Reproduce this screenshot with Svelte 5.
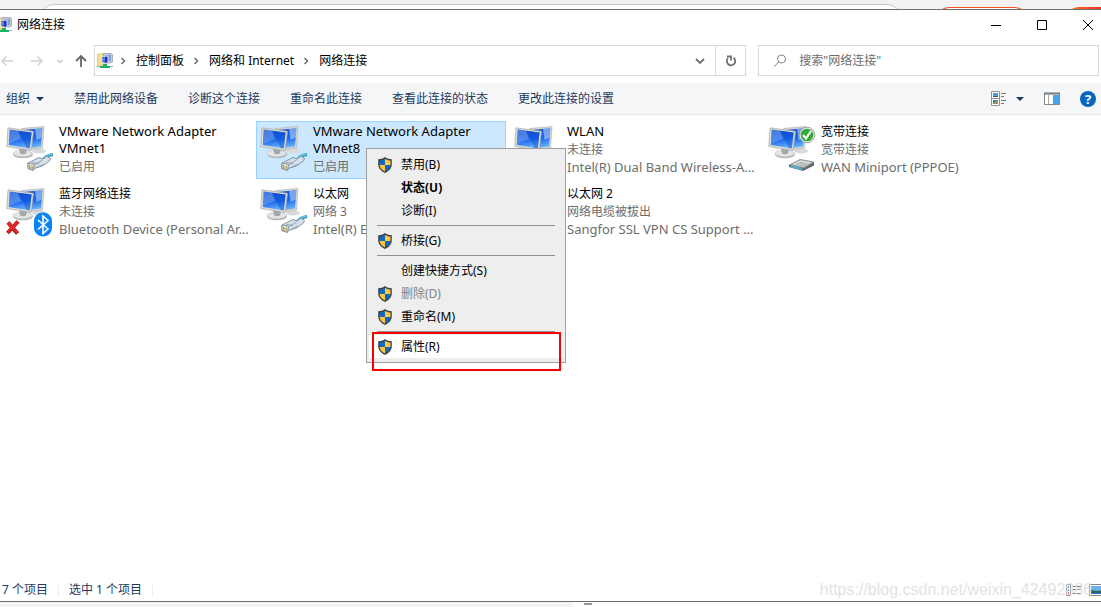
<script>
    const commands = ['禁用此网络设备', '诊断这个连接', '重命名此连接', '查看此连接的状态', '更改此连接的设置'];

    const crumbs = ['控制面板', '网络和 Internet', '网络连接'];

    const connections = [
        { name: 'VMware Network Adapter VMnet1', status: '已启用', device: '', badge: 'cable', latin: true },
        { name: 'VMware Network Adapter VMnet8', status: '已启用', device: '', badge: 'cable', latin: true },
        { name: 'WLAN', status: '未连接', device: 'Intel(R) Dual Band Wireless-A...', badge: 'none', latin: true },
        { name: '宽带连接', status: '宽带连接', device: 'WAN Miniport (PPPOE)', badge: 'modem', latin: false },
        { name: '蓝牙网络连接', status: '未连接', device: 'Bluetooth Device (Personal Ar...', badge: 'bluetooth', latin: false },
        { name: '以太网', status: '网络 3', device: 'Intel(R) Ethernet...', badge: 'cable', latin: false },
        { name: '以太网 2', status: '网络电缆被拔出', device: 'Sangfor SSL VPN CS Support ...', badge: 'none', latin: false }
    ];

    const menu = [
        [
            { text: '禁用(B)', shield: true },
            { text: '状态(U)', bold: true },
            { text: '诊断(I)' }
        ],
        [{ text: '桥接(G)', shield: true }],
        [
            { text: '创建快捷方式(S)' },
            { text: '删除(D)', shield: true, disabled: true },
            { text: '重命名(M)', shield: true }
        ],
        [{ text: '属性(R)', shield: true, hover: true }]
    ];

    let selected = $state(1);
    let query = $state('');
</script>

{#snippet folderIcon()}
    <svg class="folder-icon" viewBox="0 0 16 16" aria-hidden="true">
        <path d="M0 1h6l1 1v11H0z" fill="#f7e08a" stroke="#d8b44a" stroke-width=".6" />
        <path d="M6 .5h8.5l1 1V9L13 10H7z" fill="#c3cbd3" stroke="#8d98a5" stroke-width=".7" />
        <path d="M8 2h6v6H8z" fill="#7f9fd8" />
        <path d="M5 3.500l6-.5v7.500l-6-1z" fill="#1a2fc0" stroke="#dfe5ee" />
        <path d="M6 5l2-1v4l-2 1z" fill="#5e8cf5" />
        <path d="M6 11h4v2h3v2H3v-2h3z" fill="#19b565" />
        <path d="M0 13.500h3M13 13.500h3" stroke="#a9b5b0" />
    </svg>
{/snippet}

{#snippet shieldIcon()}
    <svg class="shield" viewBox="0 0 14 16" aria-hidden="true">
        <path d="M7 0C5 1.600 3 2.200.2 2.300v5.400C.4 11.200 3.200 14 7 16c3.800-2 6.600-4.800 6.800-8.300V2.300C11 2.200 9 1.600 7 0z" fill="#3e4348" />
        <path d="M7 1.700V8H1.500V3.500C3.800 3.400 5.400 2.900 7 1.700z" fill="#0f68c4" />
        <path d="M7 1.700V8h5.500V3.500C10.200 3.400 8.600 2.900 7 1.700z" fill="#ffc83a" />
        <path d="M1.500 8H7v6.500C4 12.900 1.800 10.700 1.500 8z" fill="#ffc83a" />
        <path d="M12.500 8H7v6.500c3-1.600 5.200-3.800 5.500-6.500z" fill="#0f68c4" />
    </svg>
{/snippet}

{#snippet adapterIcon(badge)}
    <svg class="adapter" viewBox="0 0 48 48" aria-hidden="true">
        <ellipse cx="33" cy="28" rx="7" ry="2.500" fill="#d8d9da" />
        <path d="M15.500 5.500L38 3.500 36.500 25l-12 1.500z" fill="#d3d6d2" stroke="#b3b6b2" stroke-width=".7" />
        <path d="M18 7l18.300-1.700L35 23.500l-10 1.200z" fill="url(#screen)" />
        <path d="M29 6l7.300-.7-.7 9.500-5 2z" fill="#b5d7fb" opacity=".6" />
        <ellipse cx="17" cy="31.500" rx="10" ry="3.800" fill="#b4b5b6" />
        <ellipse cx="16.500" cy="30.500" rx="9.500" ry="3.300" fill="#e4e5e5" stroke="#bbbdbe" stroke-width=".5" />
        <path d="M13 25l8 1-1 4.500q-3.500 1.500-6 0z" fill="#a5a8aa" />
        <path d="M2 4.800L27.500 8.300l-2.300 19.200L.8 23.500z" fill="#deded9" stroke="#a3a6a6" stroke-width=".7" />
        <path d="M3.700 6.600l21.900 3-1.800 15.800-21-3.300z" fill="url(#screen)" />
        <path d="M3.700 6.600l8.300 1.100 3 8.300-12 4.500z" fill="#d3e6fd" opacity=".28" />
        <path d="M13 7.900l12.600 1.700-1.800 15.800-3.300-.5z" fill="#0a48c8" opacity=".4" />
        {#if badge === 'cable'}
            <path d="M37 37q3-4.500 10-5.500" fill="none" stroke="#2d9bc1" stroke-width="3" />
            <path d="M37 36q3-4 9-4.500" fill="none" stroke="#7fd4ec" stroke-width="1.200" />
            <path d="M22 40l11-5.500 4 1.500 4-3 3.500 2.500-1 2.500-7 5-7 2-3 2-4.500-1.500z" fill="#d4dfe9" stroke="#6d8192" stroke-width=".8" />
            <path d="M22 40l6.500 1.500-.8 6-5.700-2z" fill="#ecebd0" stroke="#6f7f8c" stroke-width=".8" />
            <path d="M23.500 42v3.500M25 42.500V46M26.700 43v3.500" stroke="#a28d3c" stroke-width=".8" />
            <path d="M28.500 42l8-5M30 45l8-4M26 39.500l7 1" fill="none" stroke="#8197aa" stroke-width=".8" />
        {:else if badge === 'modem'}
            <circle cx="39" cy="12" r="7.800" fill="#e4e8e4" stroke="#8f948f" stroke-width=".8" />
            <circle cx="39" cy="12" r="6.300" fill="#2eaa32" />
            <path d="M35 12l3 3.500 5-7.500" fill="none" stroke="#fff" stroke-width="2.200" />
            <path d="M21 42l11-5.500 14 2.500-10 6z" fill="#bcbec0" stroke="#77797b" stroke-width=".7" />
            <path d="M21 42v2l14 4 11-5.500V39l-10 6z" fill="#66696b" />
            <path d="M22.500 43q5-2 12 3l-.5 1.500-11-3z" fill="#58abc4" />
            <path d="M26 41l7-3 9 2" fill="none" stroke="#e8e8e8" />
        {:else if badge === 'bluetooth'}
            <path d="M2 37.500l9.500 11M12 36.500L1.500 48" stroke="#9e1414" stroke-width="4" />
            <path d="M2 37.500l9.500 10M12 36.500L1.500 47.500" stroke="#e3262a" stroke-width="2.600" />
            <rect x="28" y="27.500" width="18" height="24" rx="8.500" fill="#0a84f5" />
            <path d="M32 35l10 9-5 4.500V31l5 4.500-10 9" fill="none" stroke="#fff" stroke-width="1.600" />
        {/if}
    </svg>
{/snippet}

<svg class="defs" width="0" height="0" aria-hidden="true">
    <linearGradient id="screen" x1=".3" y1="0" x2=".5" y2="1">
        <stop offset="0" stop-color="#1450cc" />
        <stop offset=".55" stop-color="#1b68ee" />
        <stop offset="1" stop-color="#6cb4fb" />
    </linearGradient>
</svg>

<div class="desktop">
    <div class="behind">
        <span class="tab"></span>
        <span class="tab hot"></span>
        <span class="tab fill"></span>
    </div>

    <main class="window">
        <header class="titlebar">
            {@render folderIcon()}
            <h1>网络连接</h1>
            <div class="controls">
                <button aria-label="最小化"><svg viewBox="0 0 12 12"><path d="M1 6.500h10" /></svg></button>
                <button aria-label="最大化"><svg viewBox="0 0 12 12"><path d="M1.500 1.500h9v9h-9z" /></svg></button>
                <button aria-label="关闭"><svg viewBox="0 0 12 12"><path d="M1 1l10 10M11 1L1 11" /></svg></button>
            </div>
        </header>

        <div class="navbar">
            <div class="history">
                <button aria-label="后退"><svg viewBox="0 0 14 14"><path d="M13 7H2M6.500 2.500L2 7l4.500 4.500" stroke="#d2d2d2" /></svg></button>
                <button aria-label="前进"><svg viewBox="0 0 14 14"><path d="M1 7h11M7.500 2.500L12 7l-4.500 4.500" stroke="#d2d2d2" /></svg></button>
                <button class="recent" aria-label="最近"><svg viewBox="0 0 14 14"><path d="M4.500 6l2.500 2.500L9.500 6" stroke="#c9c9c9" /></svg></button>
                <button class="up" aria-label="向上"><svg viewBox="0 0 14 14"><path d="M7 13V2M2 7l5-5 5 5" stroke="#666" stroke-width="1.800" /></svg></button>
            </div>
            <div class="address">
                {@render folderIcon()}
                <nav>
                    {#each crumbs as crumb}
                        <svg class="sep" viewBox="0 0 6 8"><path d="M1.500 1l3 3-3 3" /></svg>
                        <a href="#top">{crumb}</a>
                    {/each}
                </nav>
                <button class="drop" aria-label="以前的位置"><svg viewBox="0 0 12 12"><path d="M2 4l4 4 4-4" /></svg></button>
                <button class="refresh" aria-label="刷新">
                    <svg viewBox="0 0 12 12"><path d="M3 3.200a4.200 4.200 0 1 0 5.500-.5" /><path d="M2 1.500h4v4" /></svg>
                </button>
            </div>
            <label class="search">
                <svg viewBox="0 0 14 14"><circle cx="8.500" cy="5" r="4" /><path d="M5.500 8L1 13" /></svg>
                <input type="text" aria-label="搜索" placeholder={'搜索"网络连接"'} bind:value={query} />
            </label>
        </div>

        <div class="toolbar">
            <button class="organize">组织 <span class="caret"></span></button>
            {#each commands as command}
                <button>{command}</button>
            {/each}
            <div class="views">
                <button class="layout" aria-label="更改视图">
                    <svg viewBox="0 0 16 16">
                        <path d="M1.500.5h8v14h-8zM1.500 7.500h8" fill="#fff" stroke="#929292" />
                        <path d="M3 2h5v4H3z" fill="#4ba0dc" />
                        <path d="M3 5h5v1H3z" fill="#355e5f" />
                        <path d="M3 9h5v4H3z" fill="#62a45a" />
                        <path d="M3 9h2v2H3z" fill="#2e75c8" />
                        <path d="M5 11h2v2H5z" fill="#db803e" />
                        <path d="M11 2.500h5M11 5.500h3M11 9.500h5M11 12.500h3" stroke="#777" />
                    </svg>
                    <span class="caret"></span>
                </button>
                <button aria-label="预览窗格">
                    <svg viewBox="0 0 16 16">
                        <path d="M.5 2.500h15v11H.5z" fill="#fff" stroke="#888" />
                        <path d="M0 2.500h16" stroke="#777" stroke-width="2" />
                        <path d="M4.500 3v10" stroke="#aaa" />
                        <path d="M9 4h6v9H9z" fill="#4ba3ea" />
                    </svg>
                </button>
                <button aria-label="帮助" class="help">?</button>
            </div>
        </div>

        <section class="content">
            <div class="tiles">
                {#each connections as item, index}
                    <button class="tile" class:selected={selected === index} onclick={() => (selected = index)}>
                        {@render adapterIcon(item.badge)}
                        <span class="info">
                            <span class={item.latin ? 'name latin' : 'name'}>{item.name}</span>
                            <span class="status">{item.status}</span>
                            {#if item.device}
                                <span class="device latin">{item.device}</span>
                            {/if}
                        </span>
                    </button>
                {/each}
            </div>

            <div class="menu" role="menu">
                {#each menu as group, index}
                    {#if index > 0}
                        <hr />
                    {/if}
                    {#each group as item}
                        <button role="menuitem" class:bold={item.bold} class:hover={item.hover} disabled={item.disabled}>
                            <span class="slot">
                                {#if item.shield}{@render shieldIcon()}{/if}
                            </span>
                            {item.text}
                        </button>
                    {/each}
                {/each}
                <div class="marker"></div>
            </div>
        </section>

        <footer class="statusbar">
            <span>7 个项目</span>
            <span>选中 1 个项目</span>
            <div class="modes">
                <button aria-label="详细信息">
                    <svg viewBox="0 0 18 12">
                        <path d="M1.500.5h4v11h-4z" fill="#fff" stroke="#999" />
                        <path d="M3 2h1v2H3z" fill="#3b8fd0" />
                        <path d="M3 5h1v2H3z" fill="#4471c0" />
                        <path d="M3 8h1v2H3z" fill="#d05050" />
                        <path d="M7 2.500h4M12 2.500h4M7 5.500h4M12 5.500h4M7 9.500h4M12 9.500h4" stroke="#777" />
                    </svg>
                </button>
                <button aria-label="大图标">
                    <svg viewBox="0 0 18 12">
                        <path d="M.5.5H18v11H.5z" fill="#fff" stroke="#888" />
                        <path d="M2 2h16v8H2z" fill="#69b3ec" />
                        <path d="M2 6l6 1 10-1v4H2z" fill="#2c6656" />
                        <path d="M2 9h16v1H2z" fill="#2c70c4" />
                    </svg>
                </button>
            </div>
            <div class="watermark">https://blog.csdn.net/weixin_42492886</div>
        </footer>
    </main>

    <div class="below"><span class="grip"></span></div>
</div>

<style>
    :global(body) {
        margin: 0;
    }

    .desktop {
        display: flex;
        flex-direction: column;
        min-height: 100vh;
        overflow: hidden;
        background: #fff;
        color: #000;
        font: 12px/18px "Noto Sans", "Noto Sans CJK SC", sans-serif;
    }

    .defs {
        position: absolute;
    }

    button {
        padding: 0;
        border: 0;
        background: none;
        color: inherit;
        font: inherit;
        text-align: left;
    }

    svg {
        display: block;
        flex: none;
    }

    .latin {
        font-size: 13px;
    }

    .behind {
        display: flex;
        height: 9px;
        overflow: hidden;
        background: #f2f2f2;
    }

    .tab {
        box-sizing: border-box;
        flex: 1;
        height: 30px;
        margin: 4px 34px 0 40px;
        border: 1px solid #c8c8c8;
        border-radius: 14px;
        background: #fff;
    }

    .tab.hot {
        flex: none;
        width: 94px;
        margin: 7px 36px 0 0;
        border-color: #f4511e;
    }

    .tab.fill {
        flex: none;
        width: 60px;
        margin: 7px -24px 0 0;
        border: 0;
        background: linear-gradient(90deg, #f58220, #ff2a1a 60%);
    }

    .window {
        display: flex;
        flex: 1;
        flex-direction: column;
        border-top: 1px solid #6f6f6f;
        border-bottom: 1px solid #6f6f6f;
    }

    .folder-icon {
        width: 16px;
        height: 16px;
    }

    .titlebar {
        display: flex;
        align-items: center;
        height: 29px;
        margin-left: -4px;
    }

    h1 {
        flex: 1;
        margin: 0 0 0 5px;
        font-size: 12px;
        font-weight: 400;
    }

    .controls {
        display: flex;
        margin-right: -10px;
    }

    .controls button {
        display: grid;
        place-items: center;
        width: 46px;
        height: 28px;
    }

    .controls svg {
        width: 12px;
        height: 12px;
        fill: none;
        stroke: #000;
    }

    .navbar {
        display: flex;
        align-items: center;
        padding: 6px 2px 7px 0;
    }

    .history {
        display: flex;
        flex: none;
        align-items: center;
        width: 94px;
    }

    .history button {
        flex: none;
        width: 30px;
    }

    .history button.recent {
        width: 21px;
        margin-left: -7px;
    }

    .history button.up {
        width: 20px;
    }

    .history svg {
        width: 14px;
        height: 14px;
        fill: none;
        stroke-width: 1.5;
    }

    .address,
    .search {
        display: flex;
        align-items: center;
        box-sizing: border-box;
        height: 31px;
        border: 1px solid #d9d9d9;
    }

    .address {
        flex: 1;
        padding-left: 2px;
    }

    nav {
        display: flex;
        flex: 1;
        align-items: center;
        margin-left: 7px;
    }

    nav a {
        margin: 0 9px 0 10px;
        color: inherit;
        text-decoration: none;
        white-space: nowrap;
    }

    .sep {
        width: 6px;
        height: 8px;
        fill: none;
        stroke: #666;
        stroke-width: 1.4;
    }

    .drop,
    .refresh {
        display: grid;
        place-items: center;
        width: 30px;
        height: 29px;
    }

    .refresh {
        border-left: 1px solid #d9d9d9;
    }

    .drop svg,
    .refresh svg {
        width: 12px;
        height: 12px;
        fill: none;
        stroke: #707070;
        stroke-width: 1.8;
    }

    .search {
        flex: none;
        gap: 12px;
        width: 31%;
        margin-left: 12px;
        padding-left: 14px;
    }

    .search svg {
        width: 14px;
        height: 14px;
        fill: none;
        stroke: #8b7f86;
    }

    .search input {
        flex: 1;
        min-width: 0;
        padding: 0;
        border: 0;
        outline: 0;
        font: inherit;
    }

    .search input::placeholder {
        color: #6d6d6d;
        opacity: 1;
    }

    .toolbar {
        display: flex;
        align-items: center;
        gap: 30px;
        height: 31px;
        padding: 0 5px 0 6px;
        border-bottom: 1px solid #e5e8ec;
        background: #f5f6f8;
        color: #1e395b;
        white-space: nowrap;
    }

    .organize,
    .layout {
        display: flex;
        align-items: center;
        gap: 6px;
    }

    .caret {
        border: 4px solid transparent;
        border-top-color: #1e395b;
        border-bottom: 0;
    }

    .views {
        display: flex;
        align-items: center;
        gap: 20px;
        margin-left: auto;
    }

    .views .layout {
        gap: 10px;
    }

    .views svg {
        width: 16px;
        height: 16px;
    }

    .help {
        width: 16px;
        border-radius: 50%;
        background: #0865c2;
        color: #fff;
        font-size: 13px;
        font-weight: 700;
        line-height: 16px;
        text-align: center;
    }

    .content {
        position: relative;
        flex: 1;
        padding: 6px 2px;
    }

    .tiles {
        display: grid;
        grid-template-columns: repeat(auto-fill, 250px);
        gap: 4px;
    }

    .tile {
        display: flex;
        gap: 5px;
        align-items: flex-start;
        box-sizing: border-box;
        height: 58px;
        padding: 1px 2px 0 3px;
        border: 1px solid transparent;
    }

    .tile.selected {
        border-color: #99d1ff;
        background: #cce8ff;
    }

    .adapter {
        width: 48px;
        height: 48px;
        overflow: visible;
    }

    .info {
        display: flex;
        flex: 1;
        flex-direction: column;
        min-width: 0;
    }

    .name.latin {
        padding-bottom: 1px;
        line-height: 17px;
    }

    .status,
    .device {
        color: #6d6d6d;
    }

    .device {
        line-height: 17px;
        white-space: nowrap;
    }

    .menu {
        position: absolute;
        top: 33px;
        left: 366px;
        box-sizing: border-box;
        width: 200px;
        padding: 4px 2px;
        border: 1px solid #a0a0a0;
        background: #eee;
    }

    .menu button {
        display: flex;
        align-items: center;
        width: 100%;
        height: 23px;
        padding-left: 8px;
    }

    .menu button.bold {
        font-weight: 700;
    }

    .menu button.hover {
        background: #fff;
    }

    .menu button:disabled {
        color: #848484;
    }

    .menu hr {
        height: 1px;
        margin: 3px 8px;
        border: 0;
        background: #919191;
    }

    .slot {
        width: 24px;
    }

    .shield {
        width: 16px;
        height: 16px;
    }

    .marker {
        position: absolute;
        right: 4px;
        bottom: -9px;
        left: 5px;
        height: 35px;
        border: 2px solid #f00;
        pointer-events: none;
    }

    .statusbar {
        position: relative;
        display: flex;
        align-items: center;
        height: 22px;
        padding-left: 2px;
        color: #1e395b;
    }

    .statusbar span {
        margin-right: 10px;
        padding-right: 10px;
        border-right: 1px solid #eee;
        line-height: 12px;
    }

    .modes {
        display: flex;
        gap: 6px;
        margin: 0 -6px 0 auto;
    }

    .modes svg {
        width: 18px;
        height: 12px;
    }

    .watermark {
        position: absolute;
        right: 9px;
        color: #dcdcdc;
        font: 16px/20px "Liberation Sans", sans-serif;
        opacity: 0.8;
        pointer-events: none;
    }

    .below {
        height: 5px;
        background: linear-gradient(90deg, #f3f3f3 52%, #fff 52%);
    }

    .grip {
        display: block;
        width: 8px;
        height: 2px;
        margin-left: 53%;
        border-top: 1px solid #fff;
        background: #999;
    }
</style>
